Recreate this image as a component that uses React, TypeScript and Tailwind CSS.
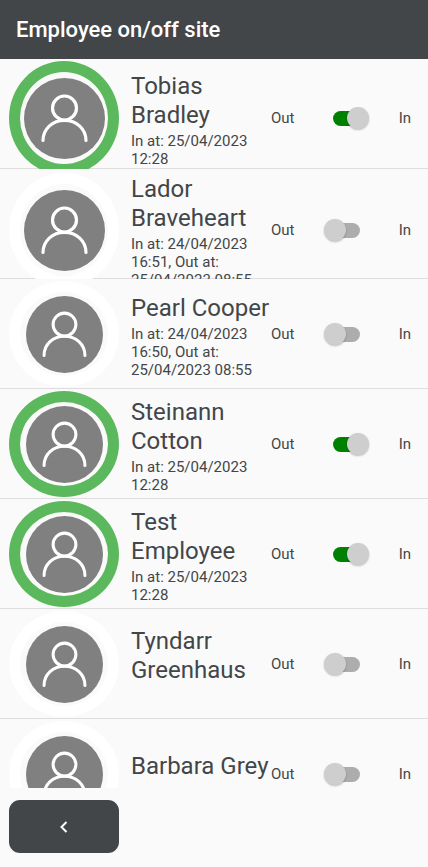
import clsx from "clsx";

type Employee = {
  id: string;
  name: string;
  status?: string;
  onSite: boolean;
  largePhoto?: boolean;
};

const employees: Employee[] = [
  { id: "tobias", name: "Tobias Bradley", status: "In at: 25/04/2023 12:28", onSite: true, largePhoto: true },
  { id: "lador", name: "Lador Braveheart", status: "In at: 24/04/2023 16:51, Out at: 25/04/2023 08:55", onSite: false, largePhoto: true },
  { id: "pearl", name: "Pearl Cooper", status: "In at: 24/04/2023 16:50, Out at: 25/04/2023 08:55", onSite: false },
  { id: "steinann", name: "Steinann Cotton", status: "In at: 25/04/2023 12:28", onSite: true },
  { id: "test", name: "Test Employee", status: "In at: 25/04/2023 12:28", onSite: true },
  { id: "tyndarr", name: "Tyndarr Greenhaus", onSite: false },
  { id: "barbara", name: "Barbara Grey", onSite: false },
];

function Avatar({ onSite, large }: { onSite: boolean; large?: boolean }) {
  return (
    <div
      className={clsx(
        "flex w-[110px] shrink-0 items-center justify-center rounded-[50%] border-[11px]",
        large ? "h-[114px]" : "h-[106px]",
        onSite ? "border-[#5cb85c]" : "border-white",
      )}
    >
      <svg viewBox="0 0 81 81" className={clsx("shrink-0", large ? "size-[81px]" : "size-[77px]")} fill="none" aria-hidden="true">
        <circle cx="40.5" cy="40.5" r="40.5" fill="#808080" />
        <g stroke="#fff" strokeWidth="3.2" strokeLinecap="round">
          <circle cx="40.5" cy="30" r="12" />
          <path d="M19 62.5C19 51 28.5 42.3 40.5 42.3S62 51 62 62.5" />
        </g>
      </svg>
    </div>
  );
}

function SiteSwitch({ employee }: { employee: Employee }) {
  return (
    <div className="flex flex-1 items-center justify-between text-[15px] leading-[18px]">
      <label htmlFor={employee.id}>Out</label>
      <input
        id={employee.id}
        type="checkbox"
        role="switch"
        aria-label={`${employee.name} on site`}
        defaultChecked={employee.onSite}
        className="relative h-[15px] w-[27px] appearance-none rounded-full bg-[#adadad] before:absolute before:-top-1 before:-left-[9px] before:size-[22px] before:rounded-full before:bg-[#cecece] before:shadow-[0_1px_2px_rgba(0,0,0,0.25)] checked:bg-[#008000] checked:before:left-[14px]"
      />
      <label htmlFor={employee.id}>In</label>
    </div>
  );
}

function EmployeeRow({ employee }: { employee: Employee }) {
  return (
    <li className="h-[110px] shrink-0 overflow-hidden bg-[linear-gradient(to_top,#dedede_1px,transparent_1px)]">
      <div className="flex min-h-[110px] items-center py-0.5 pr-[17px] pl-[9px]">
        <Avatar onSite={employee.onSite} large={employee.largePhoto} />
        <div className="ml-3 w-[140px] shrink-0 pt-1">
          <h2 className="text-2xl leading-[29px]">{employee.name}</h2>
          <p className="mt-0.5 min-h-[18px] text-[15px] leading-[18px]">{employee.status}</p>
        </div>
        <SiteSwitch employee={employee} />
      </div>
    </li>
  );
}

export default function App() {
  return (
    <div className="flex h-screen flex-col bg-[#fafafa] font-[Roboto,sans-serif] text-[#424649]">
      <header className="flex h-[59px] shrink-0 items-center bg-[#424649] px-4 text-white">
        <h1 className="text-[22px] leading-7 font-medium">Employee on/off site</h1>
      </header>
      <main className="min-h-0 flex-1 overflow-y-auto [scrollbar-width:none]">
        <ul className="flex flex-col">
          {employees.map((employee) => (
            <EmployeeRow key={employee.id} employee={employee} />
          ))}
        </ul>
      </main>
      <footer className="shrink-0 px-[9px] pt-3 pb-[14px]">
        <button
          type="button"
          aria-label="Back"
          className="flex h-[53px] w-[110px] items-center justify-center rounded-[11px] bg-[#424649] text-white"
        >
          <svg viewBox="0 0 8 12" className="h-3 w-2" fill="none" stroke="currentColor" strokeWidth="2" aria-hidden="true">
            <path d="M6.5 1 1.5 6l5 5" />
          </svg>
        </button>
      </footer>
    </div>
  );
}
